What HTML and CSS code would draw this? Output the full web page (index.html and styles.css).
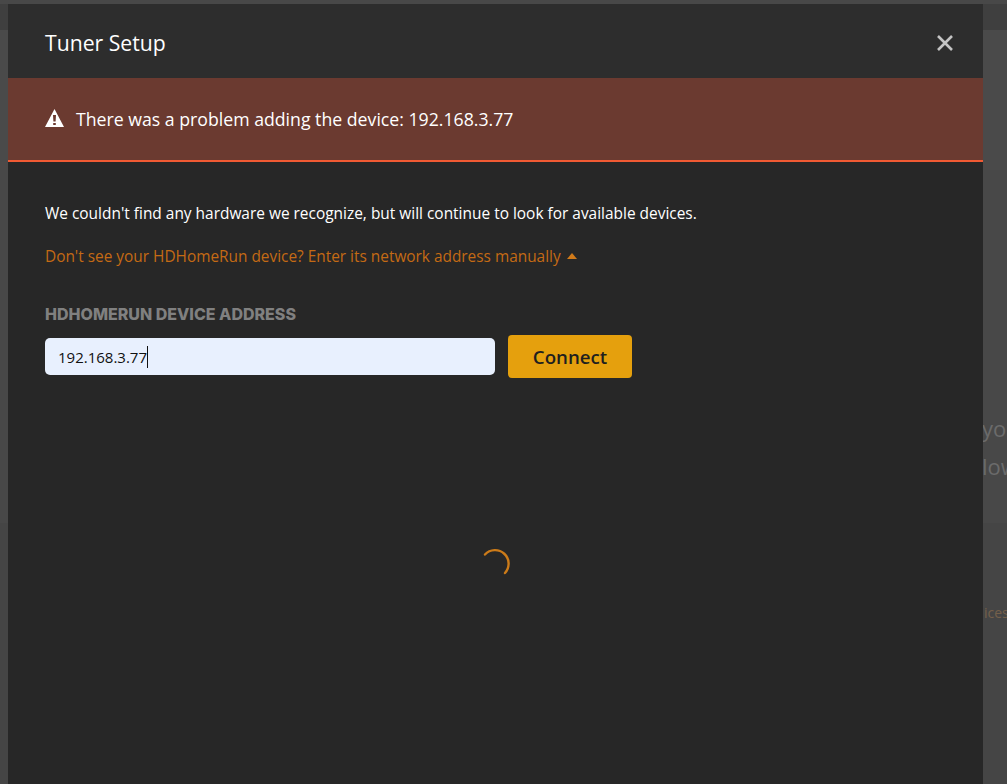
FILE: index.html
```html
<!DOCTYPE html>
<html lang="en">
<head>
<meta charset="utf-8">
<title>Tuner Setup</title>
<link rel="stylesheet" href="styles.css">
</head>
<body>
<div class="page">
  <div class="page-top"></div>
  <div class="page-nav"></div>
  <div class="page-hero"></div>
  <div class="page-text">
    <p class="page-line">you</p>
    <p class="page-line">low</p>
  </div>
  <div class="page-foot"><span class="page-link">ices</span></div>
</div>
<div class="modal">
  <header class="modal-head">
    <h1 class="modal-title">Tuner Setup</h1>
    <svg class="close" viewBox="0 0 18 18" width="18" height="18" aria-label="Close"><path d="M2 2 L16 16 M16 2 L2 16"/></svg>
  </header>
  <div class="alert">
    <svg class="alert-icon" viewBox="0 0 19 18" width="19" height="18"><path fill-rule="evenodd" d="M9.5 0 L19 18 L0 18 Z M8 6 L8.400 12.500 L10.600 12.500 L11 6 Z M8.200 14 L8.200 16 L10.800 16 L10.800 14 Z"/></svg>
    <span class="alert-text">There was a problem adding the device: 192.168.3.77</span>
  </div>
  <div class="modal-body">
    <p class="intro">We couldn't find any hardware we recognize, but will continue to look for available devices.</p>
    <p class="manual">Don't see your HDHomeRun device? Enter its network address manually <span class="caret"></span></p>
    <label class="field-label">HDHOMERUN DEVICE ADDRESS</label>
    <div class="field-row">
      <div class="input"><span>192.168.3.77</span><span class="cursor"></span></div>
      <button class="connect">Connect</button>
    </div>
    <div class="spinner-wrap">
      <svg class="spinner" viewBox="0 0 30 30" width="30" height="30"><path d="M3 6.500 A 13.500 13.500 0 0 1 23 25"/></svg>
    </div>
  </div>
</div>
</body>
</html>
```
FILE: styles.css
```css
* { box-sizing: border-box; }
html, body { margin: 0; height: 100%; }
body {
  background: #404040;
  font-family: "Open Sans", "Noto Sans", sans-serif;
  overflow: hidden;
}
.page { height: 784px; display: flex; flex-direction: column; }
.page-top { height: 4px; background: #484848; }
.page-nav { height: 26px; background: #3f3f3f; }
.page-hero { height: 140px; background: #4a4a4a; }
.page-text {
  height: 353px;
  background: #484848;
  padding: 239px 0 0 982px;
  white-space: nowrap;
  overflow: hidden;
}
.page-line { margin: 0; font-size: 22px; line-height: 38px; color: #6b6b6b; }
.page-foot {
  flex: 1;
  background: #454545;
  padding: 80px 0 0 984px;
  overflow: hidden;
  white-space: nowrap;
  font-size: 14px;
  color: #75604a;
}
.modal {
  position: absolute;
  left: 8px;
  top: 4px;
  width: 975px;
  height: 780px;
  background: #272727;
  color: #fff;
  display: flex;
  flex-direction: column;
}
.modal-head {
  height: 74px;
  flex: none;
  background: #2d2d2d;
  display: flex;
  align-items: center;
  justify-content: space-between;
  padding: 3px 29px 0 37px;
}
.modal-title { margin: 0; font-size: 21.2px; font-weight: 400; line-height: 28px; }
.close { fill: none; stroke: #c4c4c4; stroke-width: 2.6; }
.alert {
  height: 84px;
  flex: none;
  background: #6b3a30;
  border-bottom: 2px solid #f15a33;
  display: flex;
  align-items: center;
  gap: 12px;
  padding: 0 37px 0 37px;
}
.alert-icon { fill: #fff; flex: none; margin-bottom: 2px; }
.alert-text { font-size: 17.7px; line-height: 24px; }
.modal-body { flex: 1; padding: 40px 37px 0; display: flex; flex-direction: column; }
.intro { margin: 0; font-size: 15.45px; line-height: 22px; }
.manual { margin: 21px 0 0; padding-top: 1px; font-size: 15.4px; line-height: 22px; color: #c46a14; display: flex; align-items: center; gap: 6px; }
.caret { width: 0; height: 0; border-left: 5px solid transparent; border-right: 5px solid transparent; border-bottom: 6px solid #d07a1a; margin-top: -2px; }
.field-label { margin-top: 36px; font-family: Inter, "Liberation Sans", sans-serif; font-size: 16px; font-weight: 800; line-height: 20px; color: #808080; }
.field-row { margin-top: 11px; display: flex; align-items: center; gap: 13px; }
.input {
  width: 450px;
  height: 37px;
  background: #e8f0fe;
  border-radius: 5px;
  color: #111;
  font-size: 15px;
  padding: 0 0 0 13px;
  display: flex;
  align-items: center;
}
.cursor { width: 1px; height: 22px; background: #111; }
.connect {
  width: 124px;
  height: 43px;
  border: 0;
  border-radius: 4px;
  background: #e5a00d;
  color: #1f1f1f;
  font-family: inherit;
  font-size: 18.7px;
  font-weight: 600;
  padding: 0;
}
.spinner-wrap { margin-top: 170px; padding-left: 437px; }
.spinner { display: block; fill: none; stroke: #cc7b19; stroke-width: 2.4; stroke-linecap: round; }
```
